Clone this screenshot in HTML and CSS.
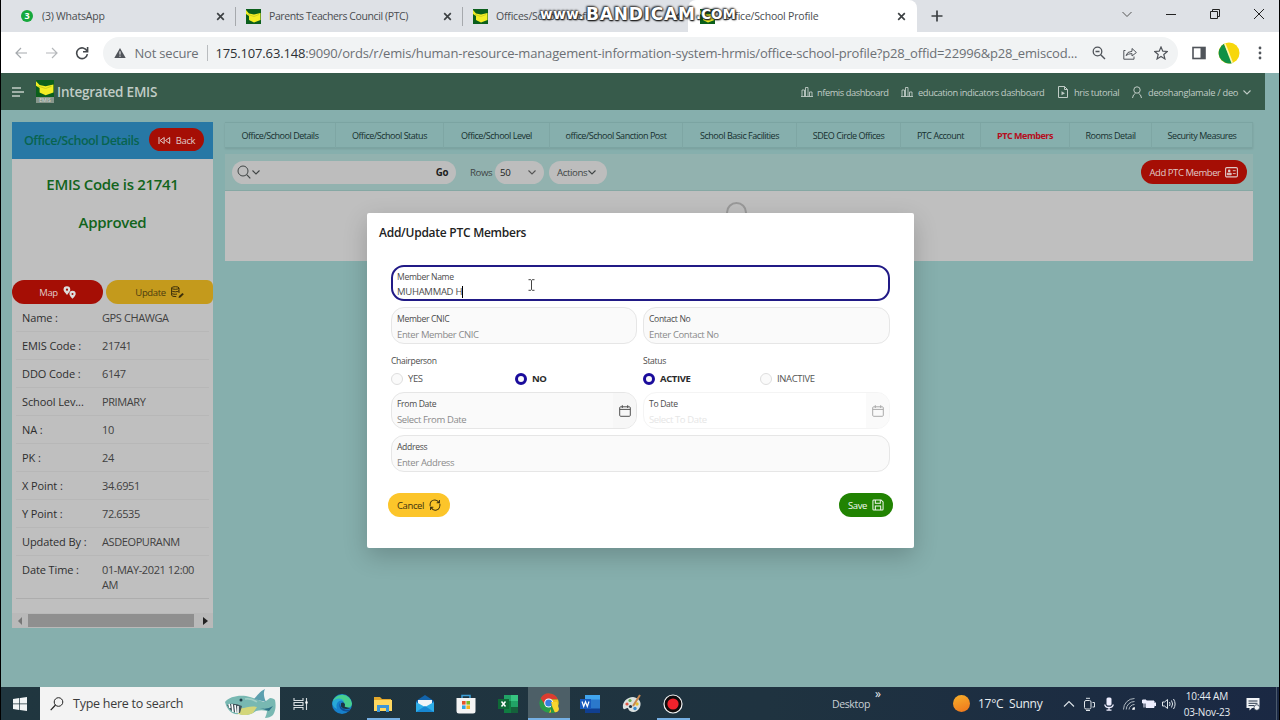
FILE: index.html
```html
<!DOCTYPE html>
<html lang="en">
<head>
    <meta charset="UTF-8">
    <meta name="viewport" content="width=device-width, initial-scale=1.0">
    <title>Office/School Profile</title>
    <link rel="stylesheet" href="styles.css">
</head>
<body>
    <svg class="defs">
        <symbol id="leaf" viewBox="0 0 15 15">
            <rect width="15" height="15" fill="#0b5f1c"/>
            <path d="M0 1L3 4.5L8 5.5L14.5 4V11L8 13.5L3 11V7L0 5Z" fill="#f2ee24"/>
            <path d="M2 5.5L8 7.5L13 5.5" fill="none" stroke="#c5cb1d" stroke-width=".8"/>
        </symbol>
        <symbol id="cross" viewBox="0 0 10 10"><path d="M2 2L8 8M8 2L2 8" stroke="#3c4043" stroke-width="1.5"/></symbol>
        <symbol id="chev" viewBox="0 0 10 10"><path d="M1.5 3.5L5 7L8.5 3.5" fill="none" stroke="currentColor" stroke-width="1.1"/></symbol>
        <symbol id="chart" viewBox="0 0 12 12"><path d="M1 10.5V4H3.5V10.5M4.5 10.5V1.5H7V10.5M8.5 10.5V6H11V10.5M0 10.5H12" fill="none" stroke="currentColor" stroke-width=".9"/></symbol>
        <symbol id="calendar" viewBox="0 0 12 12"><rect x=".7" y="1.8" width="10.6" height="9.5" rx="1" fill="none" stroke="currentColor"/><path d="M.7 4.4H11.3M3.3 .2V3M8.7 .2V3" stroke="currentColor"/></symbol>
    </svg>

    <div class="screen">
        <div class="tabstrip">
            <div class="tab tab1">
                <span class="wa">3</span>
                <span class="tab-title">(3) WhatsApp</span>
                <svg class="x"><use href="#cross"/></svg>
            </div>
            <div class="tab tab2">
                <svg class="fav"><use href="#leaf"/></svg>
                <span class="tab-title">Parents Teachers Council (PTC)</span>
                <svg class="x"><use href="#cross"/></svg>
            </div>
            <div class="tab tab3">
                <svg class="fav"><use href="#leaf"/></svg>
                <span class="tab-title">Offices/School Profile</span>
                <svg class="x"><use href="#cross"/></svg>
            </div>
            <div class="tab active">
                <svg class="fav"><use href="#leaf"/></svg>
                <span class="tab-title">Office/School Profile</span>
                <svg class="x"><use href="#cross"/></svg>
            </div>
            <svg class="plus" viewBox="0 0 12 12"><path d="M6 .5V11.5M.5 6H11.5" stroke="#3c4043" stroke-width="1.7"/></svg>
            <div class="win">
                <svg viewBox="0 0 12 12"><path d="M1.5 4L6 8.5L10.5 4" fill="none" stroke="#555"/></svg>
                <svg viewBox="0 0 12 12"><path d="M1 6.5H11" stroke="#222"/></svg>
                <svg viewBox="0 0 12 12"><path d="M1.5 3.5H8.5V10.5H1.5ZM3.5 3V1.5H10.5V8.5H9" fill="none" stroke="#222"/></svg>
                <svg viewBox="0 0 12 12"><path d="M1 1L11 11M11 1L1 11" stroke="#222"/></svg>
            </div>
        </div>

        <div class="addressbar">
            <svg class="nav" viewBox="0 0 14 14"><path d="M13 7H2M7 2L2 7L7 12" fill="none" stroke="#a5a9ad" stroke-width="1.2"/></svg>
            <svg class="nav" viewBox="0 0 14 14"><path d="M1 7H12M7 2L12 7L7 12" fill="none" stroke="#b5b8bb" stroke-width="1.2"/></svg>
            <svg class="nav" viewBox="0 0 14 14"><path d="M12 5A5.4 5.4 0 1 0 12.4 8.2M12.6 1V5.7H8" fill="none" stroke="#45494d" stroke-width="1.6"/></svg>
            <div class="omnibox">
                <svg class="warn" viewBox="0 0 12 12"><path d="M6 1L11.7 11H.3Z" fill="#50545a"/><path d="M6 4.3V7.6M6 8.6V9.8" stroke="#fff"/></svg>
                <span class="insecure">Not secure</span>
                <span class="url"><b>175.107.63.148</b>:9090/ords/r/emis/human-resource-management-information-system-hrmis/office-school-profile?p28_offid=22996&amp;p28_emiscod...</span>
                <div class="omni-icons">
                    <svg viewBox="0 0 14 14"><circle cx="5.5" cy="5.5" r="4.3" fill="none" stroke="#50545a" stroke-width="1.3"/><path d="M8.7 8.7L13 13M3.5 5.5H7.5" stroke="#50545a" stroke-width="1.4"/></svg>
                    <svg viewBox="0 0 14 14"><path d="M2.5 4.5H.8V13.2H11V10.5M3 9.5Q4 5.5 9 5.3V2.5L13.4 6.5L9 10V7.6Q5.5 7.6 3 9.5Z" fill="none" stroke="#50545a" stroke-width="1"/></svg>
                    <svg viewBox="0 0 14 14"><path d="M7 1L8.8 5.2L13.3 5.5L9.8 8.5L10.9 12.9L7 10.5L3.1 12.9L4.2 8.5L.7 5.5L5.2 5.2Z" fill="none" stroke="#50545a" stroke-width="1.2"/></svg>
                </div>
            </div>
            <svg class="panel" viewBox="0 0 14 14"><rect x="1" y="1.5" width="12" height="11" fill="none" stroke="#50545a" stroke-width="1.6"/><path d="M8.5 1.5H13V12.5H8.5Z" fill="#50545a"/></svg>
            <svg class="avatar" viewBox="0 0 22 22"><circle cx="11" cy="11" r="10.5" fill="#f7d70c"/><path d="M6 1.8A10.5 10.5 0 0 0 14.5 20.9Z" fill="#109045"/><path d="M6 1.8L7.5 1.2L15 20.6L13.5 21.2Z" fill="#fff8b0"/></svg>
            <svg class="dots" viewBox="0 0 4 14"><circle cx="2" cy="2" r="1.4"/><circle cx="2" cy="7" r="1.4"/><circle cx="2" cy="12" r="1.4"/></svg>
        </div>

        <div class="page">
            <header class="header">
                <svg class="burger" viewBox="0 0 12 10"><path d="M0 1H9M0 5H12M0 9H8" stroke="#c3cec8" stroke-width="1.3"/></svg>
                <div class="logo">
                    <svg viewBox="0 0 15 15" preserveAspectRatio="none"><use href="#leaf"/></svg>
                    <span>EMIS</span>
                </div>
                <span class="brand">Integrated EMIS</span>
                <nav class="topnav">
                    <a class="n1"><svg><use href="#chart"/></svg><span>nfemis dashboard</span></a>
                    <a class="n2"><svg><use href="#chart"/></svg><span>education indicators dashboard</span></a>
                    <a class="n3"><svg viewBox="0 0 12 12"><path d="M1.5 .5H7.5L10.5 3.5V11.5H1.5ZM7.5 .5V3.5H10.5" fill="none" stroke="currentColor"/><path d="M4.5 5.2V9.2L8 7.2Z" fill="currentColor"/></svg><span>hris tutorial</span></a>
                    <a class="n4"><svg viewBox="0 0 12 12"><circle cx="6" cy="4" r="3.2" fill="none" stroke="currentColor"/><path d="M1.5 12Q2 8.3 4.5 7.3M10.5 12Q10 8.3 7.5 7.3" fill="none" stroke="currentColor"/></svg><span>deoshanglamale / deo</span><svg class="down"><use href="#chev"/></svg></a>
                </nav>
            </header>

            <div class="content">
                <aside class="side">
                    <div class="side-head">
                        <h2>Office/School Details</h2>
                        <button class="btn red back"><svg viewBox="0 0 13 9"><path d="M1 1V8M6.2 1.5L2 4.5L6.2 7.5ZM11.7 1.5L7.5 4.5L11.7 7.5Z" fill="none" stroke="currentColor"/></svg>Back</button>
                    </div>
                    <div class="status">
                        <p>EMIS Code is 21741</p>
                        <p>Approved</p>
                    </div>
                    <div class="side-btns">
                        <button class="btn red map">Map<svg viewBox="0 0 13 13"><path d="M4 9C2 6.5 .5 5 .5 3.7A3.4 3.4 0 0 1 7.3 3.7C7.3 5 6 6.5 4 9Z" fill="#ddd"/><circle cx="4" cy="3.7" r="1.1" fill="#a50e05"/><path d="M9.5 12.8C7.8 10.8 6.4 9.4 6.4 8A3 3 0 0 1 12.7 8C12.7 9.4 11.2 10.8 9.5 12.8Z" fill="#ddd"/><circle cx="9.5" cy="8" r="1" fill="#a50e05"/></svg></button>
                        <button class="btn gold update">Update<svg viewBox="0 0 13 13"><path d="M.6 2Q.6 .7 4.3 .7T8 2V7M.6 2V9.3Q1 10.7 5.3 10.6M.6 2Q1 3.3 4.3 3.3T8 2M.6 4.6Q1 5.8 4.3 5.8T8 4.6M.6 7Q1 8.3 4.3 8.3L6 8" fill="none" stroke="#3c2f0b"/><path d="M7.5 12L8 10L11.5 7L12.8 8.3L9.5 11.5Z" fill="#3c2f0b"/></svg></button>
                    </div>
                    <dl class="details">
                        <div><dt>Name :</dt><dd>GPS CHAWGA</dd></div>
                        <div><dt>EMIS Code :</dt><dd>21741</dd></div>
                        <div><dt>DDO Code :</dt><dd>6147</dd></div>
                        <div><dt>School Lev...</dt><dd>PRIMARY</dd></div>
                        <div><dt>NA :</dt><dd>10</dd></div>
                        <div><dt>PK :</dt><dd>24</dd></div>
                        <div><dt>X Point :</dt><dd>34.6951</dd></div>
                        <div><dt>Y Point :</dt><dd>72.6535</dd></div>
                        <div><dt>Updated By :</dt><dd>ASDEOPURANM</dd></div>
                        <div><dt>Date Time :</dt><dd>01-MAY-2021 12:00 AM</dd></div>
                    </dl>
                    <div class="hscroll">
                        <i class="arrow left"></i>
                        <i class="thumb"></i>
                        <i class="arrow right"></i>
                    </div>
                </aside>

                <main class="main">
                    <div class="subtabs">
                        <a>Office/School Details</a>
                        <a>Office/School Status</a>
                        <a>Office/School Level</a>
                        <a>office/School Sanction Post</a>
                        <a>School Basic Facilities</a>
                        <a>SDEO Circle Offices</a>
                        <a>PTC Account</a>
                        <a class="current">PTC Members</a>
                        <a>Rooms Detail</a>
                        <a>Security Measures</a>
                    </div>
                    <div class="toolbar">
                        <div class="search">
                            <svg class="lens" viewBox="0 0 14 14"><circle cx="6" cy="6" r="5" fill="none" stroke="currentColor"/><path d="M9.7 9.7L13.3 13.3" stroke="currentColor" stroke-width="1.2"/></svg>
                            <svg class="down"><use href="#chev"/></svg>
                            <b>Go</b>
                        </div>
                        <span class="rows">Rows</span>
                        <div class="select"><span>50</span><svg class="down"><use href="#chev"/></svg></div>
                        <div class="actions"><span>Actions</span><svg class="down"><use href="#chev"/></svg></div>
                        <button class="btn red add">Add PTC Member<svg viewBox="0 0 13 11"><rect x=".6" y=".6" width="11.8" height="9.3" rx="1.2" fill="none" stroke="currentColor" stroke-width="1.1"/><circle cx="4.2" cy="3.9" r="1.3" fill="currentColor"/><path d="M2.3 7.8V6.2H6.2V7.8ZM7.8 3.7H10.7M7.8 6.6H10.7" fill="currentColor" stroke="currentColor" stroke-width=".9"/></svg></button>
                    </div>
                    <div class="report"><i class="spinner"></i></div>
                </main>
            </div>

            <div class="modal">
                <h1>Add/Update PTC Members</h1>
                <div class="form">
                    <div class="field wide focus">
                        <label>Member Name</label>
                        <span class="value">MUHAMMAD H<i class="caret"></i></span>
                    </div>
                    <div class="field">
                        <label>Member CNIC</label>
                        <span class="hint">Enter Member CNIC</span>
                    </div>
                    <div class="field">
                        <label>Contact No</label>
                        <span class="hint">Enter Contact No</span>
                    </div>
                    <div class="group">
                        <label>Chairperson</label>
                        <div class="radios">
                            <span class="radio first"><i></i>YES</span>
                            <span class="radio on"><i></i>NO</span>
                        </div>
                    </div>
                    <div class="group">
                        <label>Status</label>
                        <div class="radios status-radios">
                            <span class="radio on first"><i></i>ACTIVE</span>
                            <span class="radio"><i></i>INACTIVE</span>
                        </div>
                    </div>
                    <div class="field date">
                        <div>
                            <label>From Date</label>
                            <span class="hint">Select From Date</span>
                        </div>
                        <span class="pick"><svg><use href="#calendar"/></svg></span>
                    </div>
                    <div class="field date disabled">
                        <div>
                            <label>To Date</label>
                            <span class="hint">Select To Date</span>
                        </div>
                        <span class="pick"><svg><use href="#calendar"/></svg></span>
                    </div>
                    <div class="field wide">
                        <label>Address</label>
                        <span class="hint">Enter Address</span>
                    </div>
                </div>
                <div class="modal-btns">
                    <button class="btn cancel">Cancel<svg viewBox="0 0 13 13"><path d="M1.2 7.8V6A5 5 0 0 1 10.5 3.5M11.8 5.2V7A5 5 0 0 1 2.5 9.6M11.3 1V4H8.3M1.7 12V9H4.7" fill="none" stroke="currentColor" stroke-width="1.1"/></svg></button>
                    <button class="btn save">Save<svg viewBox="0 0 13 13"><path d="M1 2Q1 1 2 1H9.8L12 3.2V11Q12 12 11 12H2Q1 12 1 11ZM3.6 1V4.6H9V1M3.6 12V7.6H9.4V12" fill="none" stroke="currentColor" stroke-width="1.1"/></svg></button>
                </div>
            </div>
        </div>

        <div class="taskbar">
            <div class="start"><svg viewBox="0 0 14 14"><path d="M0 2L6.3 1.1V6.6H0ZM7 1L14 0V6.6H7ZM0 7.3H6.3V12.9L0 12ZM7 7.3H14V14L7 13Z" fill="#f2f5f6"/></svg></div>
            <div class="tb-search">
                <svg class="tb-lens" viewBox="0 0 14 14"><circle cx="8.5" cy="5" r="4.3" fill="none" stroke="#222"/><path d="M5.5 8L.7 13.2" stroke="#222" stroke-width="1.2"/></svg>
                <span>Type here to search</span>
                <svg class="fish" viewBox="0 0 52 31">
                    <path d="M1 14C5 9 13 7 22 8C28 9 34 12 40 14C43 13 44 11 46 10C49 10 50 11 51 12C52 17 52 22 49 27C47 29 44 30 41 30C42 27 43 25 43 23C39 22 36 22 32 23C27 27 21 28 15 26C8 27 3 22 1 14Z" fill="#78b8b2"/>
                    <path d="M15 20C21 21 26 17 33 19L29 25C23 28 18 27 14 26Z" fill="#d3d67a"/>
                    <path d="M30 11C33 8 36 3 41 1C39 5 40 9 42 14Z" fill="#5d9fae"/>
                    <path d="M3 17Q9 14 18 18L16 25Q8 26 3 17Z" fill="#41545b"/>
                    <path d="M5 16L6 20M8 16L9 24M11 17L12 25M14 18V25" stroke="#fff" stroke-width="1.6"/>
                    <circle cx="17" cy="12" r="1.5" fill="#1f3b47"/>
                    <path d="M36 20Q43 22 49 18L45 23Z" fill="#2b6f86"/>
                    <path d="M21 11Q27 10 33 14" fill="none" stroke="#a2d0c8" stroke-width="1.5"/>
                </svg>
            </div>
            <div class="app"><svg viewBox="0 0 16 14"><path d="M1 1V3.5H10V1M1 13V10.5H10V13M1 5.5H10V8.5H1ZM13.5 1V13" fill="none" stroke="#d7dde0" stroke-width="1.1"/><path d="M12.3 4.5H14.7V6.5H12.3Z" fill="#fff"/></svg></div>
            <div class="app"><svg class="big" viewBox="0 0 20 20"><circle cx="10" cy="10" r="10" fill="#1780cc"/><path d="M.5 8A10 10 0 0 1 20 9.5C20 13 17 14.5 13 13.5C12 13 13 12 13 10.5C12 5 4 3 .5 8Z" fill="#47cf8f"/><path d="M.5 8C4 3 10 4 12 7C7 5 3 9 5 15C3 14 0 12 .5 8Z" fill="#28a9d8"/><path d="M8 9C6 13 9 18 16 17.5C17.5 17 18.3 15.8 18.5 15.2C14 17 7.5 14.5 8 9Z" fill="#104e94"/><path d="M9 9.2A2.8 2.8 0 0 1 13 10.5L12.7 12.7L18.3 14.3Q12 16.5 9 12.5Z" fill="#1c3542"/></svg></div>
            <div class="app run"><svg class="big" viewBox="0 0 20 20"><path d="M1 3H7L9 5H18V17H1Z" fill="#e4a82b"/><path d="M1 6H19V17H1Z" fill="#ffd860"/><path d="M4 11H16V18H13V14H7V18H4Z" fill="#3d96d8"/></svg></div>
            <div class="app"><svg class="big" viewBox="0 0 20 20"><path d="M1 7L10 1L19 7V17H1Z" fill="#1264ac"/><path d="M3 6H17V14H3Z" fill="#f1f4f7"/><path d="M1 8L10 13L19 8V18H1Z" fill="#2eaee8"/><path d="M1 18L10 12L19 18Z" fill="#1787d2"/></svg></div>
            <div class="app"><svg class="big" viewBox="0 0 20 20"><path d="M6 5V1.5H14V5" fill="none" stroke="#3d9fd7" stroke-width="1.5"/><path d="M.5 4H19.5V17Q19.5 19.5 17 19.5H3Q.5 19.5 .5 17Z" fill="#f4f4f4"/><path d="M6 7H9.6V10.6H6Z" fill="#e85329"/><path d="M10.4 7H14V10.6H10.4Z" fill="#7cb929"/><path d="M6 11.4H9.6V15H6Z" fill="#33a6e4"/><path d="M10.4 11.4H14V15H10.4Z" fill="#f8b61c"/></svg></div>
            <div class="app"><svg class="big" viewBox="0 0 20 20"><path d="M6 1H20V19H6Z" fill="#21a366"/><path d="M13 1H20V7H13Z" fill="#37c481"/><path d="M6 7H13V19H6Z" fill="#107c41"/><path d="M13 13H20V19H13Z" fill="#15613b"/><path d="M0 5H11V15H0Z" fill="#0f6937"/><path d="M3.5 7.5L7.5 12.5M7.5 7.5L3.5 12.5" stroke="#fff" stroke-width="1.5"/></svg></div>
            <div class="app current-app"><svg class="big" viewBox="0 0 20 20"><circle cx="10" cy="10" r="9.7" fill="#2a9c49"/><path d="M1.6 5.2A9.7 9.7 0 0 1 19 6.5H10L6 12Z" fill="#dc3c31"/><path d="M19 6.5A9.7 9.7 0 0 1 10 19.7L14 12L10 6.5Z" fill="#f4c51c"/><circle cx="9.7" cy="10" r="4.5" fill="#fff"/><circle cx="9.7" cy="10" r="3.5" fill="#377fe0"/><path d="M12 9L18 9L20 16Q19 20 15 19Z" fill="#fad530"/><path d="M12 11L16 20H12Z" fill="#2d9744"/></svg></div>
            <div class="app"><svg class="big" viewBox="0 0 20 20"><path d="M5 1H20V19H5Z" fill="#2b78cb"/><path d="M5 1H20V5.5H5Z" fill="#41a5ee"/><path d="M5 14.5H20V19H5Z" fill="#103f91"/><path d="M0 5H11V15H0Z" fill="#185abd"/><path d="M2 7.5L3.7 12.5L5.5 7.8L7.3 12.5L9 7.5" fill="none" stroke="#fff" stroke-width="1.2"/></svg></div>
            <div class="app"><svg class="big" viewBox="0 0 20 20"><path d="M1 14C0 8 5 3 11 3C17 4 20 8 18 13C16 18 11 19 8 17C6 16 7 14 5 14C3 15 2 16 1 14Z" fill="#dbe1df"/><circle cx="5" cy="10" r="1.6" fill="#df5743"/><circle cx="8" cy="6.5" r="1.6" fill="#67ad4c"/><circle cx="15" cy="10" r="1.7" fill="#e5bd31"/><circle cx="13" cy="14.5" r="1.7" fill="#398bd0"/><circle cx="8.5" cy="12.5" r="1.6" fill="#23303f"/><path d="M18 1L11 12" stroke="#c9864e" stroke-width="2"/></svg></div>
            <div class="app run"><svg class="big" viewBox="0 0 20 20"><circle cx="10" cy="10" r="9" fill="#100b0c" stroke="#f3f3f3" stroke-width="1.2"/><circle cx="10" cy="10" r="5.6" fill="#f0222c"/></svg></div>
            <span class="desktop">Desktop</span>
            <span class="more">»</span>
            <i class="sun"></i>
            <span class="weather">17°C&nbsp; Sunny</span>
            <div class="tray">
                <svg viewBox="0 0 14 14"><path d="M2 9.5L7 4.5L12 9.5" fill="none" stroke="#dde3e8" stroke-width="1.1"/></svg>
                <svg viewBox="0 0 14 14"><rect x="2.5" y="3.5" width="6.5" height="8.5" rx="1.5" fill="none" stroke="#dde3e8"/><path d="M4 1.3H8M10.5 5.5H12.5V10H10.5M4 13.5H8" fill="none" stroke="#dde3e8"/></svg>
                <svg viewBox="0 0 14 14"><rect x="4.5" y=".5" width="5" height="8" rx="1.5" fill="#eef"/><path d="M2.8 7.5Q3 10.5 7 10.5T11.2 7.5M7 10.5V13M4.5 13.2H9.5" fill="none" stroke="#eef" stroke-width="1.3"/></svg>
                <svg viewBox="0 0 14 14"><path d="M1.5 12.5A11 11 0 0 1 12.5 1.5M4.2 12.5A8.3 8.3 0 0 1 12.5 4.5M7 12.5A5.5 5.5 0 0 1 12.5 7.5" fill="none" stroke="#aeb8c0"/><path d="M10 12.8A3 3 0 0 1 12.8 10V12.8Z" fill="#fff"/></svg>
                <svg viewBox="0 0 14 14"><path d="M4 4H12V10.5H4Z" fill="#eef" stroke="#eef"/><path d="M12.5 6H14V8.5H12.5ZM.5 3H4V6H.5ZM2 6V10.5" fill="#eef" stroke="#eef"/></svg>
                <svg viewBox="0 0 14 14"><path d="M.5 5H2.5L5.5 2.5V11.5L2.5 9H.5ZM7.5 5Q8.7 7 7.5 9M9.5 3.5Q11.7 7 9.5 10.5M11.5 2Q14.7 7 11.5 12" fill="none" stroke="#dde3e8"/></svg>
            </div>
            <div class="clock"><span>10:44 AM</span><span>03-Nov-23</span></div>
            <svg class="notif" viewBox="0 0 14 14"><path d="M.5 1H13.5V11H6L3.5 13.5V11H.5Z" fill="#f2f4f7"/><path d="M2.5 4H11.5M2.5 6.3H11.5M2.5 8.6H8" stroke="#28374a"/><circle cx="10.8" cy="10.5" r="2.8" fill="#f2f4f7" stroke="#28374a" stroke-width=".8"/></svg>
            <i class="peek"></i>
        </div>

        <div class="watermark"><span class="www">www.</span><span class="big-word">BANDICAM</span><span>.COM</span></div>
        <svg class="ibeam" viewBox="0 0 7 12"><path d="M.5 .7H2.8L3.5 1.4L4.2 .7H6.5M.5 11.3H2.8L3.5 10.6L4.2 11.3H6.5M3.5 1.4V10.6" fill="none" stroke="#444"/></svg>
    </div>
</body>
</html>
```
FILE: styles.css
```css
* {
    box-sizing: border-box;
}
body {
    margin: 0;
    font-family: "Open Sans", "Noto Sans", sans-serif;
    background: #000;
}
svg {
    display: block;
    flex: none;
}
p, h1, h2, dl, dd {
    margin: 0;
}
.defs {
    position: absolute;
    width: 0;
    height: 0;
}
.screen {
    position: relative;
    display: flex;
    flex-direction: column;
    width: 1280px;
    height: 720px;
    padding: 0 1px;
    overflow: hidden;
    white-space: nowrap;
}

/* browser tabs */
.tabstrip {
    display: flex;
    align-items: center;
    height: 32px;
    background: #dee1e6;
    color: #4a4d51;
    font-size: 10.5px;
    letter-spacing: -.2px;
}
.tab {
    display: flex;
    align-items: center;
    height: 32px;
}
.tab-title {
    flex: 1;
    margin-left: 8px;
}
.tab1 { width: 234px; padding: 0 9px 0 20px; }
.tab1 .tab-title { margin-left: 9px; }
.tab2 {
    width: 227px;
    padding: 0 9px 0 11px;
    letter-spacing: -.4px;
}
.tab3 { width: 226px; padding: 0 6px 0 11px; }
.tab2::before, .tab3::before {
    content: "";
    width: 1px;
    height: 19px;
    margin-left: -11px;
    margin-right: 10px;
    background: #a6a9ad;
}
.active {
    width: 229px;
    padding: 0 10px 0 12px;
    background: #fff;
    border-radius: 8px 8px 0 0;
}
.fav {
    width: 15px;
    height: 15px;
}
.x {
    width: 11px;
    height: 11px;
}
.wa {
    width: 12px;
    height: 12px;
    border-radius: 50%;
    background: #16a83c;
    color: #fff;
    font-size: 9px;
    font-weight: 700;
    line-height: 12px;
    text-align: center;
}
.plus {
    width: 12px;
    height: 12px;
    margin-left: 14px;
}
.win {
    display: flex;
    gap: 32px;
    margin: -4px 14px 0 auto;
}
.win svg {
    width: 12px;
    height: 12px;
}

/* address bar */
.addressbar {
    display: flex;
    align-items: center;
    height: 41px;
    padding-left: 13px;
    background: #fff;
}
.nav {
    width: 14px;
    height: 14px;
    margin-right: 16.5px;
}
.omnibox {
    display: flex;
    align-items: center;
    width: 1075px;
    height: 32px;
    margin-left: -3px;
    padding: 0 10px 0 11px;
    border-radius: 16px;
    background: #f1f3f4;
    color: #6c7075;
    font-size: 13px;
}
.warn {
    width: 12px;
    height: 12px;
}
.insecure {
    flex: none;
    width: 73px;
    margin-left: 9px;
    border-right: 1px solid #b9bcbf;
    line-height: 16px;
    letter-spacing: -.2px;
}
.url {
    margin-left: 8px;
    letter-spacing: -.165px;
}
.url b {
    font-weight: 400;
    color: #2c2f33;
}
.omni-icons {
    display: flex;
    gap: 17px;
    margin-left: auto;
}
.omni-icons svg, .panel {
    width: 14px;
    height: 14px;
}
.panel { margin-left: 14px; }
.avatar {
    width: 22px;
    height: 22px;
    margin-left: 12px;
}
.dots {
    width: 4px;
    height: 14px;
    margin-left: 18px;
    fill: #50545a;
}

/* application */
.page {
    position: relative;
    height: 614px;
    background: #86afad;
}
.header {
    display: flex;
    align-items: center;
    width: 1264px;
    height: 37px;
    padding-left: 11px;
    background: #375b4b;
    color: #c0ccc6;
}
.burger {
    width: 12px;
    height: 10px;
}
.logo {
    display: flex;
    flex-direction: column;
    align-items: center;
    width: 18px;
    margin-left: 12px;
}
.logo svg {
    width: 18px;
    height: 17px;
}
.logo span {
    width: 18px;
    height: 6px;
    background: #87968b;
    color: #d8ded9;
    font-size: 5px;
    line-height: 6px;
    text-align: center;
}
.brand {
    margin-left: 3px;
    padding-top: 1px;
    font-size: 13.5px;
    font-weight: 600;
    letter-spacing: -.22px;
}
.topnav {
    display: flex;
    margin-left: auto;
    padding-right: 13px;
    font-size: 9.3px;
    letter-spacing: -.38px;
}
.topnav a {
    display: flex;
    align-items: center;
}
.topnav span {
    padding-top: 1px;
}
.topnav svg {
    width: 12px;
    height: 12px;
    margin-right: 5px;
}
.n1 {
    width: 100px;
    letter-spacing: -.45px;
}
.n1 svg { margin-right: 4px; }
.n2 { width: 156px; }
.n3 { width: 74px; }
.n4 {
    width: 121px;
    letter-spacing: -.3px;
}
.topnav .down {
    width: 10px;
    height: 10px;
    margin: 0 0 0 auto;
}
.content {
    display: flex;
    align-items: flex-start;
    gap: 12px;
    padding: 12px 0 0 11px;
}
.btn {
    display: flex;
    align-items: center;
    justify-content: center;
    gap: 5px;
    height: 24px;
    padding: 1px 0 0;
    border: 0;
    border-radius: 12px;
    font-family: inherit;
    font-size: 9.5px;
    letter-spacing: -.38px;
}
.red {
    background: #a50e05;
    color: #e0c9c7;
}
.gold {
    background: #c49a1c;
    color: #4c3c10;
}

/* school details */
.side {
    width: 201px;
    height: 506px;
    background: #bfbfbf;
}
.side-head {
    display: flex;
    align-items: center;
    justify-content: space-between;
    height: 37px;
    padding: 0 9px 0 12px;
    background: #2778a5;
}
.side-head h2 {
    font-size: 12.5px;
    font-weight: 600;
    letter-spacing: -.48px;
    color: #086450;
}
.back {
    width: 55px;
    height: 23px;
    margin-top: -2px;
}
.back svg {
    width: 13px;
    height: 9px;
}
.status {
    height: 121px;
    padding-top: 15px;
    text-align: center;
    color: #12641c;
    font-size: 15px;
    font-weight: 600;
    letter-spacing: -.3px;
}
.status p {
    height: 38px;
    line-height: 21px;
}
.side-btns {
    display: flex;
    gap: 3px;
}
.side-btns svg {
    width: 13px;
    height: 13px;
}
.map { width: 91px; }
.update {
    width: 107px;
    border-radius: 12px 6px 6px 12px;
}
.details {
    padding: 0 4px;
    font-size: 11px;
    letter-spacing: -.1px;
    color: #2e2e2e;
}
.details div {
    display: flex;
    min-height: 28px;
    padding: 6px 0 6px 6px;
    border-bottom: 1px solid #b7b7b7;
    line-height: 15px;
}
.details div:last-child {
    height: 43px;
    border-color: #adadad;
}
.details dt { width: 80px; }
.details dd {
    width: 100px;
    white-space: normal;
    letter-spacing: -.4px;
    color: #414141;
}
.hscroll {
    display: flex;
    align-items: center;
    height: 15px;
    margin-top: 14px;
    background: #b9b9b9;
}
.thumb {
    width: 166px;
    height: 13px;
    margin: 0 9px 0 6px;
    background: #8f8f8f;
}
.arrow {
    border: 4px solid transparent;
}
.left {
    margin-left: 6px;
    border-left-width: 0;
    border-right: 4px solid #777;
}
.right {
    border-right-width: 0;
    border-left: 5px solid #222;
}

/* main region */
.main {
    width: 1028px;
}
.subtabs {
    display: grid;
    grid-template-columns: 111px 108px 106px 133px 114px 104px 80px 89px 82px 101px;
    height: 26px;
    border: 1px solid #7ba4a2;
    border-width: 1px 0;
    box-shadow: 0 1px 2px rgba(0, 0, 0, .1);
    font-size: 9px;
    letter-spacing: -.47px;
    line-height: 25px;
    text-align: center;
    color: #16302f;
}
.subtabs a {
    border-right: 1px solid #7ea6a4;
}
.subtabs .current {
    color: #b50d20;
    font-weight: 700;
}
.toolbar {
    display: flex;
    align-items: center;
    height: 37px;
    margin-top: 6px;
    padding: 0 6px 0 7px;
    background: #92b2af;
    border-bottom: 1px solid #86a8a4;
    color: #404545;
    font-size: 9.7px;
    letter-spacing: -.4px;
}
.toolbar span, .toolbar b {
    padding-top: 1px;
}
.search, .select, .actions {
    display: flex;
    align-items: center;
    height: 23px;
    border-radius: 12px;
    background: #bdbdbd;
}
.search {
    width: 224px;
    padding: 0 8px 0 5px;
}
.search b {
    margin-left: auto;
    color: #202020;
}
.lens {
    width: 14px;
    height: 14px;
}
.toolbar .down {
    width: 10px;
    height: 10px;
}
.rows {
    width: 25px;
    margin-left: 14px;
}
.select {
    justify-content: space-between;
    width: 49px;
    padding: 0 7px 0 5px;
    color: #222;
}
.select .down {
    color: #555;
}
.actions {
    width: 58px;
    margin-left: 5px;
    padding-left: 8px;
}
.add {
    width: 106px;
    margin-left: auto;
    letter-spacing: -.45px;
}
.add svg {
    width: 13px;
    height: 11px;
}
.report {
    height: 70px;
    padding: 11px 0 0 501px;
    background: #bfbfbf;
}
.spinner {
    display: block;
    width: 21px;
    height: 21px;
    border: 2px solid #999;
    border-radius: 50%;
}

/* dialog */
.modal {
    position: absolute;
    left: 366px;
    top: 140px;
    width: 547px;
    height: 335px;
    padding: 0 24px;
    background: #fff;
    border-radius: 2px;
    box-shadow: 0 8px 24px rgba(0, 0, 0, .2);
}
.modal h1 {
    height: 52px;
    margin-left: -12px;
    padding-top: 11px;
    font-size: 12px;
    font-weight: 600;
    line-height: 18px;
    letter-spacing: -.26px;
    color: #222;
}
.form {
    display: grid;
    grid-template-columns: 246px 247px;
    grid-template-rows: 36px 37px 37px 37px 37px;
    gap: 5.7px 6px;
    font-size: 9.5px;
    letter-spacing: -.38px;
}
.field {
    padding: 4px 5px 0;
    border: 1px solid #e6e6e6;
    border-radius: 13px;
    background: #fafafa;
}
.wide { grid-column: span 2; }
.form label {
    display: block;
    font-size: 8.6px;
    line-height: 15px;
    letter-spacing: -.33px;
    color: #4b4b4b;
}
.value, .hint {
    display: flex;
    align-items: center;
    line-height: 15px;
    color: #8b8b8b;
}
.value {
    letter-spacing: -.28px;
    color: #4c4c4c;
}
.focus {
    padding: 2px 4px;
    border: 2px solid #211a86;
    background: #fff;
}
.focus label { padding-top: 1px; line-height: 14px; }
.caret {
    width: 1px;
    height: 12px;
    background: #000;
}
.group label {
    margin-top: 5px;
}
.radios {
    display: flex;
    margin-top: 3px;
}
.radio {
    display: flex;
    align-items: center;
    gap: 5px;
    color: #555;
}
.radio i {
    width: 12px;
    height: 12px;
    border: 1px solid #dedede;
    border-radius: 50%;
    background: #fafafa;
}
.first { width: 124px; }
.status-radios .first { width: 117px; }
.on {
    color: #2a2a2a;
    font-weight: 700;
}
.on i {
    border: 3px solid #1a0c9c;
}
.date {
    display: flex;
    justify-content: space-between;
    padding-right: 0;
}
.pick {
    display: flex;
    align-items: center;
    justify-content: center;
    width: 23px;
    margin-top: -4px;
    border-radius: 0 12px 12px 0;
    background: #f7f7f7;
    color: #505050;
}
.pick svg {
    width: 12px;
    height: 12px;
}
.disabled {
    border-color: #f4f4f4;
    background: #fff;
}
.disabled .hint { color: #e6e6e6; }
.disabled .pick {
    background: #fafafa;
    color: #aaa;
}
.modal-btns {
    display: flex;
    justify-content: space-between;
    margin: 21px -3px 0;
}
.modal-btns svg {
    width: 12px;
    height: 12px;
}
.cancel {
    width: 62px;
    background: #fcc52a;
    color: #3c3110;
}
.save {
    width: 54px;
    background: #218302;
    color: #f3f8f1;
}

/* taskbar */
.taskbar {
    display: flex;
    align-items: center;
    height: 33px;
    background: linear-gradient(90deg, #20363f, #1f3340 60%, #1a2843);
    color: #e8edf1;
}
.start {
    width: 39px;
    padding-left: 12px;
}
.start svg {
    width: 14px;
    height: 14px;
}
.tb-search {
    display: flex;
    align-items: center;
    width: 240px;
    height: 33px;
    padding-left: 10px;
    background: #f3f3f3;
    color: #3b3b3b;
    font-size: 12.5px;
    letter-spacing: -.25px;
}
.tb-lens {
    width: 14px;
    height: 14px;
    margin-right: 9px;
}
.fish {
    width: 52px;
    height: 31px;
    margin: 0 4px 0 auto;
}
.app {
    display: flex;
    align-items: center;
    justify-content: center;
    width: 41.4px;
    height: 33px;
}
.app svg {
    width: 16px;
    height: 14px;
}
.app .big {
    width: 20px;
    height: 20px;
}
.run {
    background: linear-gradient(#76b0e4, #76b0e4) center bottom / 33px 2px no-repeat;
}
.current-app {
    background: #4d5f67;
    border-bottom: 2px solid #76b0e4;
}
.desktop {
    width: 43px;
    margin-left: 138px;
    font-size: 10.5px;
    letter-spacing: -.35px;
    color: #c8d0d5;
}
.more {
    margin-top: -20px;
    width: 78px;
    font-size: 12px;
}
.sun {
    width: 17px;
    height: 17px;
    border-radius: 50%;
    background: linear-gradient(160deg, #f8b12b, #ed741c);
}
.weather {
    width: 84px;
    margin-left: 8px;
    font-size: 12px;
    letter-spacing: -.25px;
}
.tray {
    display: flex;
    gap: 6px;
}
.tray svg {
    width: 14px;
    height: 14px;
}
.clock {
    display: flex;
    flex-direction: column;
    align-items: center;
    width: 50px;
    margin-left: 6px;
    font-size: 10px;
    line-height: 16px;
    letter-spacing: -.15px;
}
.notif {
    width: 14px;
    height: 14px;
    margin-left: 14px;
}
.peek {
    width: 1px;
    height: 33px;
    margin-left: auto;
    margin-right: 2px;
    background: #4b5a6c;
}

/* overlays */
.watermark {
    position: absolute;
    left: 540px;
    top: 4px;
    display: flex;
    align-items: center;
    height: 20px;
    color: #fff;
    font-family: "DejaVu Sans", sans-serif;
    font-size: 13.5px;
    font-weight: 700;
    text-shadow: 0 0 2px #222, 1px 1px 2px #222, -1px -1px 2px #333, 0 1px 1px #333;
}
.www {
    width: 46px;
    letter-spacing: .7px;
}
.big-word {
    width: 110px;
    font-size: 17px;
    letter-spacing: .8px;
}
.ibeam {
    position: absolute;
    left: 528px;
    top: 279px;
    width: 7px;
    height: 12px;
}
```
